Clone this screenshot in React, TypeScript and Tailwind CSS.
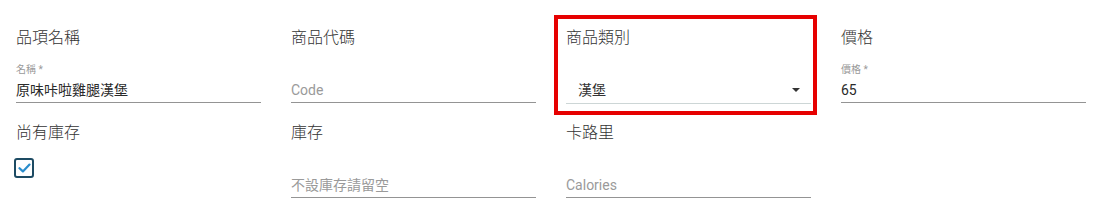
import React from "react";

// ================================
// Product Item Form
// ================================

interface FieldProps {
  title: string;
  label?: string;
  value?: string;
  placeholder?: string;
}

function TextField({ title, label, value, placeholder }: FieldProps) {
  return (
    <div className="flex flex-col">
      <h3 className="h-6 text-[16px] font-light leading-6 text-[#333]">{title}</h3>
      <div className="mt-[13px] h-[14px] text-[10px] leading-[14px] text-[#9a9a9a]">
        {label}
      </div>
      <div className="mt-[3px] border-b border-[#949494] pb-[2px] text-[14px] leading-5">
        {value ? (
          <span className="text-[#2a2a2a]">{value}</span>
        ) : (
          <span className="text-[#9a9a9a]">{placeholder}</span>
        )}
      </div>
    </div>
  );
}

function SelectField({ title, value }: { title: string; value: string }) {
  return (
    <div className="relative flex flex-col">
      {/* highlight frame */}
      <span className="pointer-events-none absolute -left-[12px] -right-[6px] -top-[11px] -bottom-[11px] border-4 border-[#e60000]" />
      <h3 className="h-6 text-[16px] font-light leading-6 text-[#333]">{title}</h3>
      <div className="mt-[30px] flex items-center justify-between border-b border-[#cdd6d6] pb-[3px] pl-[12px] pr-[10px] text-[14px] leading-5 text-[#333]">
        <span>{value}</span>
        <svg width="8" height="4" viewBox="0 0 8 4" className="mr-[1px]">
          <path d="M0 0h8L4 4z" fill="#333" />
        </svg>
      </div>
    </div>
  );
}

function CheckField({ title }: { title: string }) {
  return (
    <div className="flex flex-col">
      <h3 className="h-6 text-[16px] font-light leading-6 text-[#333]">{title}</h3>
      <div className="-ml-[2px] mt-[13px] flex h-[20px] w-[20px] items-center justify-center rounded-[3px] border-2 border-[#1d4b63]">
        <svg width="13" height="10" viewBox="0 0 13 10">
          <path
            d="M1.5 5.2l3.4 3.2L11.5 1.6"
            fill="none"
            stroke="#2a8dcc"
            strokeWidth="2.2"
            strokeLinecap="round"
            strokeLinejoin="round"
          />
        </svg>
      </div>
    </div>
  );
}

export default function App() {
  return (
    <div className="h-[214px] w-[1096px] bg-white pl-[16px] pt-[26px] font-['Roboto','Noto_Sans_CJK_TC',sans-serif]">
      <div className="grid grid-cols-[repeat(4,245px)] gap-x-[30px] gap-y-[17px]">
        <TextField title="品項名稱" label="名稱 *" value="原味咔啦雞腿漢堡" />
        <TextField title="商品代碼" placeholder="Code" />
        <SelectField title="商品類別" value="漢堡" />
        <TextField title="價格" label="價格 *" value="65" />
        <CheckField title="尚有庫存" />
        <TextField title="庫存" placeholder="不設庫存請留空" />
        <TextField title="卡路里" placeholder="Calories" />
      </div>
    </div>
  );
}
